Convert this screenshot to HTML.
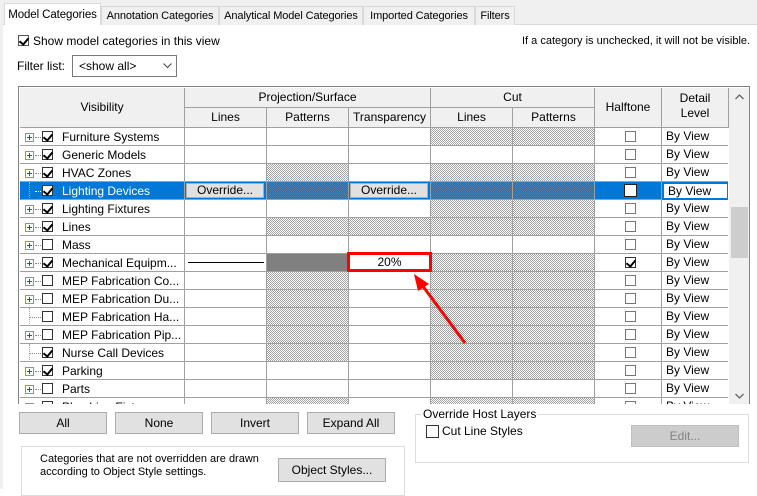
<!DOCTYPE html>
<html><head><meta charset="utf-8"><style>
*{box-sizing:border-box;margin:0;padding:0}
body{width:757px;height:489px;background:#fff;font-family:"Liberation Sans",sans-serif;font-size:12px;color:#000;position:relative;overflow:hidden}
.a{position:absolute}
.tab{position:absolute;top:6px;height:19px;border:1px solid #d9d9d9;border-bottom:none;background:#f0f0f0;padding:3px 0 0;text-align:center;white-space:nowrap;font-size:11px;letter-spacing:-0.1px;overflow:hidden}
.cb{position:absolute;width:11px;height:11px;border:1px solid #333;background:#fff}
.ck::after{content:"";position:absolute;left:2px;top:0px;width:4px;height:7px;border:solid #000;border-width:0 2px 2px 0;transform:rotate(40deg)}
.row{position:absolute;left:20px;height:18px;width:708px}
.c{position:absolute;top:0;height:18px;border-right:1px solid #a0a0a0;border-bottom:1px solid #a0a0a0}
.h{background:repeating-conic-gradient(#a0a0a0 0 25%,#fff 0 50%) 0 0/2px 2px}
.dv{padding-left:4px;line-height:17px}
.hc{position:absolute;background:#f0f0f0;border-right:1px solid #a0a0a0;border-bottom:1px solid #a0a0a0;text-align:center}
.btn{position:absolute;background:#e1e1e1;border:1px solid #adadad;text-align:center;line-height:20px}
.exp{position:absolute;left:5px;top:5px;width:9px;height:9px;border:1px solid #919191;background:#fff}
.exp::before{content:"";position:absolute;left:1px;top:3px;width:5px;height:1px;background:#2b5797}
.exp::after{content:"";position:absolute;left:3px;top:1px;width:1px;height:5px;background:#2b5797}
.dt{position:absolute;left:15px;top:9px;width:6px;border-top:1px dotted #888}
.vl{position:absolute;left:9px;top:0;height:18px;border-left:1px dotted #aaa}
.nm{position:absolute;left:42px;top:2px;white-space:nowrap}
.rcb{left:22px;top:3px}
.hb{left:30px;top:3px;border-color:#777}
</style></head><body>
<div class="a" style="left:0;top:0;width:757px;height:25px;background:#f0f0f0"></div>
<div class="a" style="left:0;top:24px;width:757px;height:1px;background:#d9d9d9"></div>
<div class="a" style="left:0;top:24px;width:3px;height:465px;background:#f0f0f0"></div>
<div class="tab" style="left:4px;top:3px;width:97px;height:22px;background:#fff;padding-top:5px;font-size:11.5px">Model Categories</div>
<div class="tab" style="left:101px;width:118px">Annotation Categories</div>
<div class="tab" style="left:219px;width:144px">Analytical Model Categories</div>
<div class="tab" style="left:363px;width:112px">Imported Categories</div>
<div class="tab" style="left:475px;width:40px">Filters</div>

<div class="cb ck" style="left:18px;top:35px;border-color:#555"></div>
<div class="a" style="left:33px;top:34px">Show model categories in this view</div>
<div class="a" style="left:522px;top:35px;white-space:nowrap;font-size:11px">If a category is unchecked, it will not be visible.</div>
<div class="a" style="left:17px;top:59px">Filter list:</div>
<div class="a" style="left:72px;top:55px;width:105px;height:22px;border:1px solid #7a7a7a;padding:3px 0 0 6px">&lt;show all&gt;<svg class="a" style="left:90px;top:7px" width="9" height="6"><path d="M0.5 0.5L4.5 4.5L8.5 0.5" fill="none" stroke="#444"/></svg></div>

<div class="a" style="left:18px;top:86px;width:732px;height:318px;border:1px solid #828282;border-bottom:none"></div>
<div class="hc" style="left:20px;top:88px;width:165px;height:40px;line-height:38px">Visibility</div>
<div class="hc" style="left:185px;top:88px;width:246px;height:20px;line-height:19px">Projection/Surface</div>
<div class="hc" style="left:185px;top:108px;width:82px;height:20px;line-height:19px">Lines</div>
<div class="hc" style="left:267px;top:108px;width:82px;height:20px;line-height:19px">Patterns</div>
<div class="hc" style="left:349px;top:108px;width:82px;height:20px;line-height:19px">Transparency</div>
<div class="hc" style="left:431px;top:88px;width:164px;height:20px;line-height:19px">Cut</div>
<div class="hc" style="left:431px;top:108px;width:82px;height:20px;line-height:19px">Lines</div>
<div class="hc" style="left:513px;top:108px;width:82px;height:20px;line-height:19px">Patterns</div>
<div class="hc" style="left:595px;top:88px;width:67px;height:40px;line-height:38px">Halftone</div>
<div class="hc" style="left:662px;top:88px;width:67px;height:40px;line-height:15px;padding-top:3px">Detail<br>Level</div>
<div class="a" style="left:729px;top:88px;width:20px;height:316px;background:#f0f0f0"></div>
<div class="a" style="left:731px;top:207px;width:17px;height:51px;background:#cdcdcd"></div>
<svg class="a" style="left:735px;top:94px" width="9" height="6"><path d="M0.5 5L4.5 1L8.5 5" fill="none" stroke="#666" stroke-width="1.3"/></svg>
<svg class="a" style="left:735px;top:393px" width="9" height="6"><path d="M0.5 1L4.5 5L8.5 1" fill="none" stroke="#666" stroke-width="1.3"/></svg>

<div class="a" style="left:20px;top:128px;width:708px;height:276px;overflow:hidden">
<div class="row" style="left:0;top:0"><div class="c" style="left:0;width:165px"><div class="exp"></div><div class="dt"></div><div class="cb ck rcb"></div><div class="nm">Furniture Systems</div></div><div class="c" style="left:165px;width:82px"></div><div class="c" style="left:247px;width:82px"></div><div class="c" style="left:329px;width:82px"></div><div class="c h" style="left:411px;width:82px"></div><div class="c h" style="left:493px;width:82px"></div><div class="c" style="left:575px;width:67px"><div class="cb hb"></div></div><div class="c dv" style="left:642px;width:67px">By View</div></div>
<div class="row" style="left:0;top:18px"><div class="c" style="left:0;width:165px"><div class="exp"></div><div class="dt"></div><div class="cb ck rcb"></div><div class="nm">Generic Models</div></div><div class="c" style="left:165px;width:82px"></div><div class="c" style="left:247px;width:82px"></div><div class="c" style="left:329px;width:82px"></div><div class="c" style="left:411px;width:82px"></div><div class="c" style="left:493px;width:82px"></div><div class="c" style="left:575px;width:67px"><div class="cb hb"></div></div><div class="c dv" style="left:642px;width:67px">By View</div></div>
<div class="row" style="left:0;top:36px"><div class="c" style="left:0;width:165px"><div class="exp"></div><div class="dt"></div><div class="cb ck rcb"></div><div class="nm">HVAC Zones</div></div><div class="c" style="left:165px;width:82px"></div><div class="c h" style="left:247px;width:82px"></div><div class="c" style="left:329px;width:82px"></div><div class="c h" style="left:411px;width:82px"></div><div class="c h" style="left:493px;width:82px"></div><div class="c" style="left:575px;width:67px"><div class="cb hb"></div></div><div class="c dv" style="left:642px;width:67px">By View</div></div>
<div class="row" style="left:0;top:54px;background:#0078d7"><div class="c" style="left:0;width:165px;color:#fff"><div class="vl"></div><div class="dt" style="border-color:#fff"></div><div class="cb ck rcb"></div><div class="nm">Lighting Devices</div></div><div class="c" style="left:165px;width:82px"><div class="btn" style="left:1px;top:1px;width:78px;height:15px;line-height:13px">Override...</div></div><div class="c" style="left:247px;width:82px;background:repeating-conic-gradient(#4a7fae 0 25%,#0078d7 0 50%) 0 0/2px 2px"></div><div class="c" style="left:329px;width:82px"><div class="btn" style="left:1px;top:1px;width:78px;height:15px;line-height:13px">Override...</div></div><div class="c" style="left:411px;width:82px;background:repeating-conic-gradient(#4a7fae 0 25%,#0078d7 0 50%) 0 0/2px 2px"></div><div class="c" style="left:493px;width:82px;background:repeating-conic-gradient(#4a7fae 0 25%,#0078d7 0 50%) 0 0/2px 2px"></div><div class="c" style="left:575px;width:67px"><div class="cb hb" style="width:13px;height:13px;top:2px;left:29px;border-color:#222"></div></div><div class="c dv" style="left:642px;width:67px;background:#fff;border:2px solid #0078d7;line-height:14px">By View</div></div>
<div class="row" style="left:0;top:72px"><div class="c" style="left:0;width:165px"><div class="exp"></div><div class="dt"></div><div class="cb ck rcb"></div><div class="nm">Lighting Fixtures</div></div><div class="c" style="left:165px;width:82px"></div><div class="c" style="left:247px;width:82px"></div><div class="c" style="left:329px;width:82px"></div><div class="c h" style="left:411px;width:82px"></div><div class="c h" style="left:493px;width:82px"></div><div class="c" style="left:575px;width:67px"><div class="cb hb"></div></div><div class="c dv" style="left:642px;width:67px">By View</div></div>
<div class="row" style="left:0;top:90px"><div class="c" style="left:0;width:165px"><div class="exp"></div><div class="dt"></div><div class="cb ck rcb"></div><div class="nm">Lines</div></div><div class="c" style="left:165px;width:82px"></div><div class="c h" style="left:247px;width:82px"></div><div class="c h" style="left:329px;width:82px"></div><div class="c h" style="left:411px;width:82px"></div><div class="c h" style="left:493px;width:82px"></div><div class="c" style="left:575px;width:67px"><div class="cb hb"></div></div><div class="c dv" style="left:642px;width:67px">By View</div></div>
<div class="row" style="left:0;top:108px"><div class="c" style="left:0;width:165px"><div class="exp"></div><div class="dt"></div><div class="cb rcb"></div><div class="nm">Mass</div></div><div class="c" style="left:165px;width:82px"></div><div class="c" style="left:247px;width:82px"></div><div class="c" style="left:329px;width:82px"></div><div class="c" style="left:411px;width:82px"></div><div class="c" style="left:493px;width:82px"></div><div class="c" style="left:575px;width:67px"><div class="cb hb"></div></div><div class="c dv" style="left:642px;width:67px">By View</div></div>
<div class="row" style="left:0;top:126px"><div class="c" style="left:0;width:165px"><div class="exp"></div><div class="dt"></div><div class="cb ck rcb"></div><div class="nm">Mechanical Equipm...</div></div><div class="c" style="left:165px;width:82px"><div class="a" style="left:3px;top:8px;width:76px;height:1px;background:#000"></div></div><div class="c" style="left:247px;width:82px;background:#808080"></div><div class="c" style="left:329px;width:82px;text-align:center;line-height:17px">20%</div><div class="c h" style="left:411px;width:82px"></div><div class="c h" style="left:493px;width:82px"></div><div class="c" style="left:575px;width:67px"><div class="cb hb ck" style="border-color:#333"></div></div><div class="c dv" style="left:642px;width:67px">By View</div></div>
<div class="row" style="left:0;top:144px"><div class="c" style="left:0;width:165px"><div class="exp"></div><div class="dt"></div><div class="cb rcb"></div><div class="nm">MEP Fabrication Co...</div></div><div class="c" style="left:165px;width:82px"></div><div class="c h" style="left:247px;width:82px"></div><div class="c" style="left:329px;width:82px"></div><div class="c h" style="left:411px;width:82px"></div><div class="c h" style="left:493px;width:82px"></div><div class="c" style="left:575px;width:67px"><div class="cb hb"></div></div><div class="c dv" style="left:642px;width:67px">By View</div></div>
<div class="row" style="left:0;top:162px"><div class="c" style="left:0;width:165px"><div class="exp"></div><div class="dt"></div><div class="cb rcb"></div><div class="nm">MEP Fabrication Du...</div></div><div class="c" style="left:165px;width:82px"></div><div class="c h" style="left:247px;width:82px"></div><div class="c" style="left:329px;width:82px"></div><div class="c h" style="left:411px;width:82px"></div><div class="c h" style="left:493px;width:82px"></div><div class="c" style="left:575px;width:67px"><div class="cb hb"></div></div><div class="c dv" style="left:642px;width:67px">By View</div></div>
<div class="row" style="left:0;top:180px"><div class="c" style="left:0;width:165px"><div class="vl"></div><div class="dt" style="left:9px;width:12px"></div><div class="cb rcb"></div><div class="nm">MEP Fabrication Ha...</div></div><div class="c" style="left:165px;width:82px"></div><div class="c h" style="left:247px;width:82px"></div><div class="c" style="left:329px;width:82px"></div><div class="c h" style="left:411px;width:82px"></div><div class="c h" style="left:493px;width:82px"></div><div class="c" style="left:575px;width:67px"><div class="cb hb"></div></div><div class="c dv" style="left:642px;width:67px">By View</div></div>
<div class="row" style="left:0;top:198px"><div class="c" style="left:0;width:165px"><div class="exp"></div><div class="dt"></div><div class="cb rcb"></div><div class="nm">MEP Fabrication Pip...</div></div><div class="c" style="left:165px;width:82px"></div><div class="c h" style="left:247px;width:82px"></div><div class="c" style="left:329px;width:82px"></div><div class="c h" style="left:411px;width:82px"></div><div class="c h" style="left:493px;width:82px"></div><div class="c" style="left:575px;width:67px"><div class="cb hb"></div></div><div class="c dv" style="left:642px;width:67px">By View</div></div>
<div class="row" style="left:0;top:216px"><div class="c" style="left:0;width:165px"><div class="vl"></div><div class="dt" style="left:9px;width:12px"></div><div class="cb ck rcb"></div><div class="nm">Nurse Call Devices</div></div><div class="c" style="left:165px;width:82px"></div><div class="c h" style="left:247px;width:82px"></div><div class="c" style="left:329px;width:82px"></div><div class="c h" style="left:411px;width:82px"></div><div class="c h" style="left:493px;width:82px"></div><div class="c" style="left:575px;width:67px"><div class="cb hb"></div></div><div class="c dv" style="left:642px;width:67px">By View</div></div>
<div class="row" style="left:0;top:234px"><div class="c" style="left:0;width:165px"><div class="exp"></div><div class="dt"></div><div class="cb ck rcb"></div><div class="nm">Parking</div></div><div class="c" style="left:165px;width:82px"></div><div class="c" style="left:247px;width:82px"></div><div class="c" style="left:329px;width:82px"></div><div class="c h" style="left:411px;width:82px"></div><div class="c h" style="left:493px;width:82px"></div><div class="c" style="left:575px;width:67px"><div class="cb hb"></div></div><div class="c dv" style="left:642px;width:67px">By View</div></div>
<div class="row" style="left:0;top:252px"><div class="c" style="left:0;width:165px"><div class="exp"></div><div class="dt"></div><div class="cb rcb"></div><div class="nm">Parts</div></div><div class="c" style="left:165px;width:82px"></div><div class="c" style="left:247px;width:82px"></div><div class="c" style="left:329px;width:82px"></div><div class="c" style="left:411px;width:82px"></div><div class="c" style="left:493px;width:82px"></div><div class="c" style="left:575px;width:67px"><div class="cb hb"></div></div><div class="c dv" style="left:642px;width:67px">By View</div></div>
<div class="row" style="left:0;top:270px"><div class="c" style="left:0;width:165px"><div class="exp"></div><div class="dt"></div><div class="cb ck rcb"></div><div class="nm">Plumbing Fixtures</div></div><div class="c" style="left:165px;width:82px"></div><div class="c h" style="left:247px;width:82px"></div><div class="c" style="left:329px;width:82px"></div><div class="c h" style="left:411px;width:82px"></div><div class="c h" style="left:493px;width:82px"></div><div class="c" style="left:575px;width:67px"><div class="cb hb"></div></div><div class="c dv" style="left:642px;width:67px">By View</div></div>
</div>
<div class="a" style="left:347px;top:252px;width:85px;height:20px;border:3px solid #f00"></div>
<svg class="a" style="left:0;top:0" width="757" height="489"><line x1="465" y1="343" x2="422" y2="285" stroke="#f00" stroke-width="3"/><path d="M414 274L429 284L418 291Z" fill="#f00"/></svg>

<div class="btn" style="left:19px;top:412px;width:88px;height:22px">All</div>
<div class="btn" style="left:115px;top:412px;width:88px;height:22px">None</div>
<div class="btn" style="left:211px;top:412px;width:88px;height:22px">Invert</div>
<div class="btn" style="left:307px;top:412px;width:88px;height:22px">Expand All</div>
<div class="a" style="left:21px;top:446px;width:384px;height:50px;border:1px solid #dcdcdc"></div>
<div class="a" style="left:40px;top:453px;line-height:13px;font-size:11px;white-space:nowrap">Categories that are not overridden are drawn<br>according to Object Style settings.</div>
<div class="btn" style="left:278px;top:458px;width:108px;height:24px;line-height:22px">Object Styles...</div>
<div class="a" style="left:415px;top:414px;width:334px;height:49px;border:1px solid #dcdcdc"></div>
<div class="a" style="left:421px;top:407px;background:#fff;padding:0 2px">Override Host Layers</div>
<div class="cb" style="left:426px;top:425px;width:13px;height:13px"></div>
<div class="a" style="left:442px;top:424px">Cut Line Styles</div>
<div class="btn" style="left:631px;top:425px;width:108px;height:22px;background:#cccccc;border-color:#bfbfbf;color:#838383">Edit...</div>
</body></html>
